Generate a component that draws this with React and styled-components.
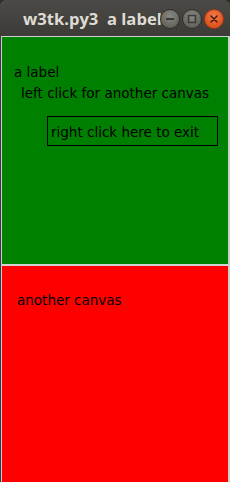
import React from "react";
import styled, { createGlobalStyle } from "styled-components";

const Global = createGlobalStyle`
  html, body { margin: 0; padding: 0; background: #2e2d2a; }
  body { width: 230px; height: 482px; overflow: hidden; }
`;

const Window = styled.div`
  width: 230px;
  height: 482px;
  display: flex;
  flex-direction: column;
  box-sizing: border-box;
  border-radius: 6px 6px 0 0;
  overflow: hidden;
  background: #3c3b37;
`;

const TitleBar = styled.div`
  height: 36px;
  flex: none;
  display: flex;
  align-items: center;
  background: linear-gradient(#4b4a46, #3c3b37);
  padding: 0 6px 0 23px;
  box-sizing: border-box;
`;

const Title = styled.div`
  flex: 1;
  min-width: 0;
  white-space: pre;
  overflow: visible;
  color: #dfdbd2;
  font-family: "Open Sans", "DejaVu Sans", sans-serif;
  font-weight: 700;
  font-size: 16.6px;
  line-height: 20px;
  margin-top: 1px;
`;

const Buttons = styled.div`
  display: flex;
  gap: 2px;
  margin-top: 2px;
`;

const CircleBtn = styled.div`
  width: 20px;
  height: 20px;
  border-radius: 50%;
  box-sizing: border-box;
  display: flex;
  align-items: center;
  justify-content: center;
  background: ${(p) =>
    p.$close
      ? "radial-gradient(circle at 50% 35%, #f47a4a, #e0531f 70%)"
      : "radial-gradient(circle at 50% 35%, #8a8882, #62615c 75%)"};
  border: 1px solid ${(p) => (p.$close ? "#9d3a17" : "#2f2e2b")};
`;

const Body = styled.div`
  flex: 1;
  display: flex;
  flex-direction: column;
  border-left: 1px solid #3a3a3e;
`;

const Frame = styled.div`
  flex: 1;
  display: flex;
  flex-direction: column;
  border-top: 1px solid #cfcfcf;
  border-left: 1px solid #c9c9cf;
  border-right: 2px solid #cfcfcf;
`;

const Canvas = styled.div`
  height: ${(p) => p.$h}px;
  flex: none;
  background: ${(p) => p.$bg};
  box-sizing: border-box;
  padding-top: ${(p) => p.$pt}px;
  display: flex;
  flex-direction: column;
  align-items: flex-start;
`;

const Sep = styled.div`
  height: 2px;
  flex: none;
  background: #d3d3d3;
`;

const Text = styled.div`
  font-family: "DejaVu Sans", sans-serif;
  font-size: 13.5px;
  line-height: 16px;
  color: #000;
  white-space: pre;
  margin-left: ${(p) => p.$ml}px;
  margin-top: ${(p) => p.$mt || 0}px;
`;

const Boxed = styled.div`
  box-sizing: border-box;
  width: 171px;
  height: 30px;
  border: 1px solid #000;
  padding: 7px 0 0 3px;
  margin-left: 45px;
  margin-top: 15px;
  font-family: "DejaVu Sans", sans-serif;
  font-size: 13.5px;
  line-height: 16px;
  color: #000;
  white-space: pre;
`;

export default function App() {
  return (
    <>
      <Global />
      <Window>
        <TitleBar>
          <Title>w3tk.py3  a label</Title>
          <Buttons>
            <CircleBtn>
              <svg width="10" height="10" viewBox="0 0 10 10">
                <rect x="1" y="4" width="8" height="2" fill="#3a3935" />
              </svg>
            </CircleBtn>
            <CircleBtn>
              <svg width="10" height="10" viewBox="0 0 10 10">
                <rect x="1.5" y="1.5" width="7" height="7" fill="none" stroke="#3a3935" strokeWidth="1.5" />
              </svg>
            </CircleBtn>
            <CircleBtn $close>
              <svg width="10" height="10" viewBox="0 0 10 10">
                <path d="M2 2 L8 8 M8 2 L2 8" stroke="#4a1e0c" strokeWidth="1.6" strokeLinecap="round" />
              </svg>
            </CircleBtn>
          </Buttons>
        </TitleBar>
        <Body>
          <Frame>
            <Canvas $h={227} $bg="#008000" $pt={27}>
              <Text $ml={12}>a label</Text>
              <Text $ml={19} $mt={5}>left click for another canvas</Text>
              <Boxed>right click here to exit</Boxed>
            </Canvas>
            <Sep />
            <Canvas $h={216} $bg="#ff0000" $pt={26}>
              <Text $ml={15}>another canvas</Text>
            </Canvas>
          </Frame>
        </Body>
      </Window>
    </>
  );
}
